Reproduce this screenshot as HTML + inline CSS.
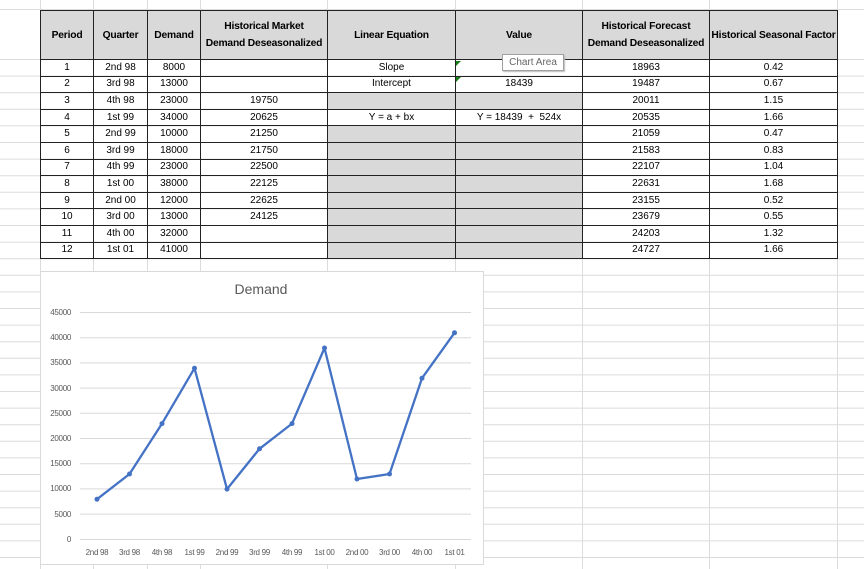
<!DOCTYPE html>
<html><head><meta charset="utf-8"><style>
html,body{margin:0;padding:0;width:864px;height:569px;overflow:hidden;background:#fff;font-family:"Liberation Sans",sans-serif;}
#grid{position:absolute;left:0;top:0;width:864px;height:569px;}
table{position:absolute;left:40px;top:10px;border-collapse:collapse;table-layout:fixed;font-size:10px;color:#000;}
td{border:1px solid #222;text-align:center;padding:0;height:15.6px;line-height:14px;white-space:nowrap;overflow:visible;}
tr.h td{background:#d9d9d9;font-weight:bold;height:48px;line-height:17px;font-size:10.3px;letter-spacing:-0.2px;}
td.g{background:#d9d9d9;}
.tip{position:absolute;left:502px;top:54px;width:60px;height:15px;border:1px solid #a0a0a0;background:#fff;color:#666;font-size:10px;line-height:15px;text-align:center;box-shadow:1px 1px 1px #bbb;}
.tri{position:absolute;width:0;height:0;border-top:5px solid #1a7f1a;border-right:5px solid transparent;}
#chart{position:absolute;left:40px;top:271px;}
</style></head><body>
<svg id="grid" width="864" height="569">
<g stroke="#dcdcdc" stroke-width="1">
<line x1="0" y1="9.5" x2="864" y2="9.5"/>
<line x1="0" y1="59.5" x2="864" y2="59.5"/>
<line x1="0" y1="76.1" x2="864" y2="76.1"/><line x1="0" y1="92.7" x2="864" y2="92.7"/><line x1="0" y1="109.3" x2="864" y2="109.3"/><line x1="0" y1="125.9" x2="864" y2="125.9"/><line x1="0" y1="142.5" x2="864" y2="142.5"/><line x1="0" y1="159.1" x2="864" y2="159.1"/><line x1="0" y1="175.7" x2="864" y2="175.7"/><line x1="0" y1="192.3" x2="864" y2="192.3"/><line x1="0" y1="208.9" x2="864" y2="208.9"/><line x1="0" y1="225.5" x2="864" y2="225.5"/><line x1="0" y1="242.1" x2="864" y2="242.1"/><line x1="0" y1="258.7" x2="864" y2="258.7"/><line x1="0" y1="275.3" x2="864" y2="275.3"/><line x1="0" y1="291.9" x2="864" y2="291.9"/><line x1="0" y1="308.5" x2="864" y2="308.5"/><line x1="0" y1="325.1" x2="864" y2="325.1"/><line x1="0" y1="341.7" x2="864" y2="341.7"/><line x1="0" y1="358.3" x2="864" y2="358.3"/><line x1="0" y1="374.9" x2="864" y2="374.9"/><line x1="0" y1="391.5" x2="864" y2="391.5"/><line x1="0" y1="408.1" x2="864" y2="408.1"/><line x1="0" y1="424.7" x2="864" y2="424.7"/><line x1="0" y1="441.3" x2="864" y2="441.3"/><line x1="0" y1="457.9" x2="864" y2="457.9"/><line x1="0" y1="474.5" x2="864" y2="474.5"/><line x1="0" y1="491.1" x2="864" y2="491.1"/><line x1="0" y1="507.7" x2="864" y2="507.7"/><line x1="0" y1="524.3" x2="864" y2="524.3"/><line x1="0" y1="540.9" x2="864" y2="540.9"/><line x1="0" y1="557.5" x2="864" y2="557.5"/>
<line x1="40.5" y1="0" x2="40.5" y2="569"/><line x1="93.5" y1="0" x2="93.5" y2="569"/><line x1="147.5" y1="0" x2="147.5" y2="569"/><line x1="200.5" y1="0" x2="200.5" y2="569"/><line x1="327.5" y1="0" x2="327.5" y2="569"/><line x1="455.5" y1="0" x2="455.5" y2="569"/><line x1="582.5" y1="0" x2="582.5" y2="569"/><line x1="709.5" y1="0" x2="709.5" y2="569"/><line x1="837.5" y1="0" x2="837.5" y2="569"/>
</g></svg>
<table>
<colgroup><col style="width:53px"><col style="width:54px"><col style="width:53px"><col style="width:127px"><col style="width:128px"><col style="width:127px"><col style="width:127px"><col style="width:128px"></colgroup>
<tr class="h"><td>Period</td><td>Quarter</td><td>Demand</td><td>Historical Market<br>Demand Deseasonalized</td><td>Linear Equation</td><td>Value</td><td>Historical Forecast<br>Demand Deseasonalized</td><td>Historical Seasonal Factor</td></tr>
<tr><td>1</td><td>2nd 98</td><td>8000</td><td></td><td>Slope</td><td></td><td>18963</td><td>0.42</td></tr>
<tr><td>2</td><td>3rd 98</td><td>13000</td><td></td><td>Intercept</td><td>18439</td><td>19487</td><td>0.67</td></tr>
<tr><td>3</td><td>4th 98</td><td>23000</td><td>19750</td><td class="g"></td><td class="g"></td><td>20011</td><td>1.15</td></tr>
<tr><td>4</td><td>1st 99</td><td>34000</td><td>20625</td><td>Y = a + bx</td><td>Y = 18439 &nbsp;+ &nbsp;524x</td><td>20535</td><td>1.66</td></tr>
<tr><td>5</td><td>2nd 99</td><td>10000</td><td>21250</td><td class="g"></td><td class="g"></td><td>21059</td><td>0.47</td></tr>
<tr><td>6</td><td>3rd 99</td><td>18000</td><td>21750</td><td class="g"></td><td class="g"></td><td>21583</td><td>0.83</td></tr>
<tr><td>7</td><td>4th 99</td><td>23000</td><td>22500</td><td class="g"></td><td class="g"></td><td>22107</td><td>1.04</td></tr>
<tr><td>8</td><td>1st 00</td><td>38000</td><td>22125</td><td class="g"></td><td class="g"></td><td>22631</td><td>1.68</td></tr>
<tr><td>9</td><td>2nd 00</td><td>12000</td><td>22625</td><td class="g"></td><td class="g"></td><td>23155</td><td>0.52</td></tr>
<tr><td>10</td><td>3rd 00</td><td>13000</td><td>24125</td><td class="g"></td><td class="g"></td><td>23679</td><td>0.55</td></tr>
<tr><td>11</td><td>4th 00</td><td>32000</td><td></td><td class="g"></td><td class="g"></td><td>24203</td><td>1.32</td></tr>
<tr><td>12</td><td>1st 01</td><td>41000</td><td></td><td class="g"></td><td class="g"></td><td>24727</td><td>1.66</td></tr>
</table>
<div class="tri" style="left:456px;top:61px"></div>
<div class="tri" style="left:456px;top:77px"></div>
<div class="tip">Chart Area</div>
<svg id="chart" width="445" height="295" viewBox="40 271 445 295">
<rect x="40.5" y="271.5" width="443" height="293" fill="#fff" stroke="#d9d9d9"/>
<text x="261" y="294" font-size="14" fill="#595959" text-anchor="middle" font-family="Liberation Sans, sans-serif">Demand</text>
<g stroke="#d9d9d9" stroke-width="1">
<line x1="80" y1="312.5" x2="471" y2="312.5"/><line x1="80" y1="337.7" x2="471" y2="337.7"/><line x1="80" y1="362.9" x2="471" y2="362.9"/><line x1="80" y1="388.1" x2="471" y2="388.1"/><line x1="80" y1="413.3" x2="471" y2="413.3"/><line x1="80" y1="438.5" x2="471" y2="438.5"/><line x1="80" y1="463.7" x2="471" y2="463.7"/><line x1="80" y1="488.9" x2="471" y2="488.9"/><line x1="80" y1="514.1" x2="471" y2="514.1"/><line x1="80" y1="539.5" x2="471" y2="539.5"/>
</g>
<g font-size="8" fill="#595959" text-anchor="end" font-family="Liberation Sans, sans-serif" letter-spacing="-0.3">
<text x="71" y="315">45000</text><text x="71" y="340">40000</text><text x="71" y="365">35000</text><text x="71" y="391">30000</text><text x="71" y="416">25000</text><text x="71" y="441">20000</text><text x="71" y="466">15000</text><text x="71" y="491">10000</text><text x="71" y="517">5000</text><text x="71" y="542">0</text>
</g>
<g font-size="8" fill="#595959" text-anchor="middle" font-family="Liberation Sans, sans-serif" letter-spacing="-0.3">
<text x="97" y="555">2nd 98</text><text x="129.5" y="555">3rd 98</text><text x="162" y="555">4th 98</text><text x="194.5" y="555">1st 99</text><text x="227" y="555">2nd 99</text><text x="259.5" y="555">3rd 99</text><text x="292" y="555">4th 99</text><text x="324.5" y="555">1st 00</text><text x="357" y="555">2nd 00</text><text x="389.5" y="555">3rd 00</text><text x="422" y="555">4th 00</text><text x="454.5" y="555">1st 01</text>
</g>
<polyline fill="none" stroke="#4472c4" stroke-width="2.3" stroke-linejoin="round" points="97,499.2 129.5,474 162,423.6 194.5,368.2 227,489.1 259.5,448.8 292,423.6 324.5,348 357,479 389.5,474 422,378.2 454.5,332.8"/>
<g fill="#4472c4">
<circle cx="97" cy="499.2" r="2.5"/><circle cx="129.5" cy="474" r="2.5"/><circle cx="162" cy="423.6" r="2.5"/><circle cx="194.5" cy="368.2" r="2.5"/><circle cx="227" cy="489.1" r="2.5"/><circle cx="259.5" cy="448.8" r="2.5"/><circle cx="292" cy="423.6" r="2.5"/><circle cx="324.5" cy="348" r="2.5"/><circle cx="357" cy="479" r="2.5"/><circle cx="389.5" cy="474" r="2.5"/><circle cx="422" cy="378.2" r="2.5"/><circle cx="454.5" cy="332.8" r="2.5"/>
</g>
</svg>
</body></html>
